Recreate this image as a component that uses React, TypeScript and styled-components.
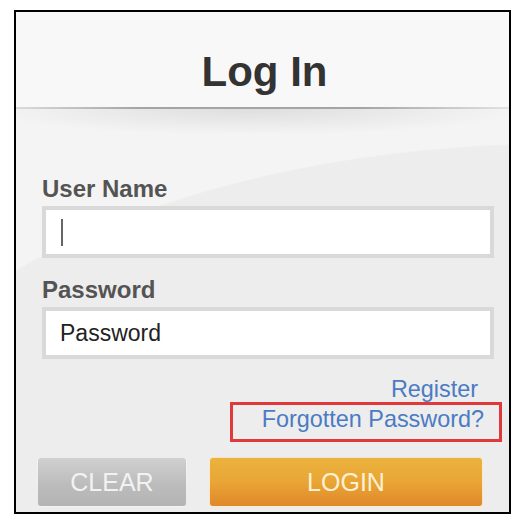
import React from "react";
import styled, { createGlobalStyle } from "styled-components";

const GlobalStyle = createGlobalStyle`
  html, body { margin: 0; padding: 0; background: #fff; }
  body { font-family: "Liberation Sans", Arial, sans-serif; }
  * { box-sizing: border-box; }
`;

const Frame = styled.div`
  width: 497px;
  height: 504px;
  margin: 10px 0 0 14px;
  border: 2px solid #000;
  display: flex;
  flex-direction: column;
  background: #eee;
  overflow: hidden;
`;

const Header = styled.header`
  height: 95px;
  padding: 39px 0 0 4px;
  background: #f8f8f8;
  display: flex;
  justify-content: center;
  align-items: flex-start;
`;

const Title = styled.h1`
  margin: 0;
  font-size: 42px;
  line-height: 42px;
  font-weight: 700;
  color: #333;
`;

const Rule = styled.div`
  height: 2px;
  background: linear-gradient(
    to right,
    rgba(160, 160, 160, 0.25),
    #a4a4a4 25%,
    #a4a4a4 70%,
    rgba(160, 160, 160, 0.15)
  );
`;

const Body = styled.div`
  flex: 1;
  padding: 66px 15px 0 26px;
  display: flex;
  flex-direction: column;
  background:
    radial-gradient(ellipse 270px 26px at 48% 0, rgba(0, 0, 0, 0.09), rgba(0, 0, 0, 0) 100%),
    radial-gradient(ellipse 720px 367px at 544px 401px, #ededed 99.6%, rgba(237, 237, 237, 0) 100%),
    #f4f4f4;
`;

const Form = styled.div`
  display: flex;
  flex-direction: column;
  gap: 18px;
`;

const Field = styled.div`
  display: flex;
  flex-direction: column;
  gap: 3px;
`;

const Label = styled.label`
  font-size: 24px;
  font-weight: 700;
  line-height: 28px;
  color: #545454;
`;

const InputWrap = styled.div`
  position: relative;
`;

const TextInput = styled.input`
  display: block;
  width: 100%;
  height: 52px;
  border: 4px solid #d9d9d9;
  background: #fff;
  padding: 0 0 0 14px;
  font-family: "Liberation Sans", Arial, sans-serif;
  font-size: 23px;
  color: #222;
  outline: none;
`;

const Caret = styled.span`
  position: absolute;
  left: 19px;
  top: 13px;
  width: 2px;
  height: 27px;
  background: #666;
`;

const Links = styled.div`
  margin-top: 15px;
  padding-right: 10px;
  display: flex;
  flex-direction: column;
  align-items: flex-end;
`;

const Link = styled.a<{ $inset?: number; $marked?: boolean }>`
  position: relative;
  font-size: 23.4px;
  line-height: 30px;
  color: #4a7bc4;
  text-decoration: none;
  margin-right: ${(p) => p.$inset ?? 0}px;
  ${(p) =>
    p.$marked &&
    `
    &::after {
      content: "";
      position: absolute;
      left: -32px;
      right: -18px;
      top: -2px;
      bottom: -8px;
      border: 3px solid #e0393b;
    }
  `}
`;

const ButtonRow = styled.div`
  margin: 23px 0 0 -5px;
  display: flex;
  gap: 22px;
`;

const Button = styled.button<{ $w: number; $tone: "grey" | "orange" }>`
  width: ${(p) => p.$w}px;
  height: 50px;
  border: 1px solid rgba(255, 255, 255, 0.75);
  border-radius: 4px;
  font-family: "Liberation Sans", Arial, sans-serif;
  font-size: 25px;
  padding: 0;
  cursor: pointer;
  color: ${(p) => (p.$tone === "grey" ? "#f2f2f2" : "#fdf1d3")};
  background: ${(p) =>
    p.$tone === "grey"
      ? "linear-gradient(#d0d0d0, #bcbcbc 55%, #b4b4b4)"
      : "linear-gradient(#ebb33e, #e9a535 50%, #e0882a)"};
`;

export default function App() {
  return (
    <>
      <GlobalStyle />
      <Frame>
        <Header>
          <Title>Log In</Title>
        </Header>
        <Rule />
        <Body>
          <Form>
            <Field>
              <Label htmlFor="user">User Name</Label>
              <InputWrap>
                <TextInput id="user" type="text" defaultValue="" />
                <Caret />
              </InputWrap>
            </Field>
            <Field>
              <Label htmlFor="pass">Password</Label>
              <TextInput id="pass" type="text" defaultValue="Password" />
            </Field>
          </Form>
          <Links>
            <Link href="#" $inset={6}>Register</Link>
            <Link href="#" $marked>Forgotten Password?</Link>
          </Links>
          <ButtonRow>
            <Button $w={150} $tone="grey">CLEAR</Button>
            <Button $w={274} $tone="orange">LOGIN</Button>
          </ButtonRow>
        </Body>
      </Frame>
    </>
  );
}
